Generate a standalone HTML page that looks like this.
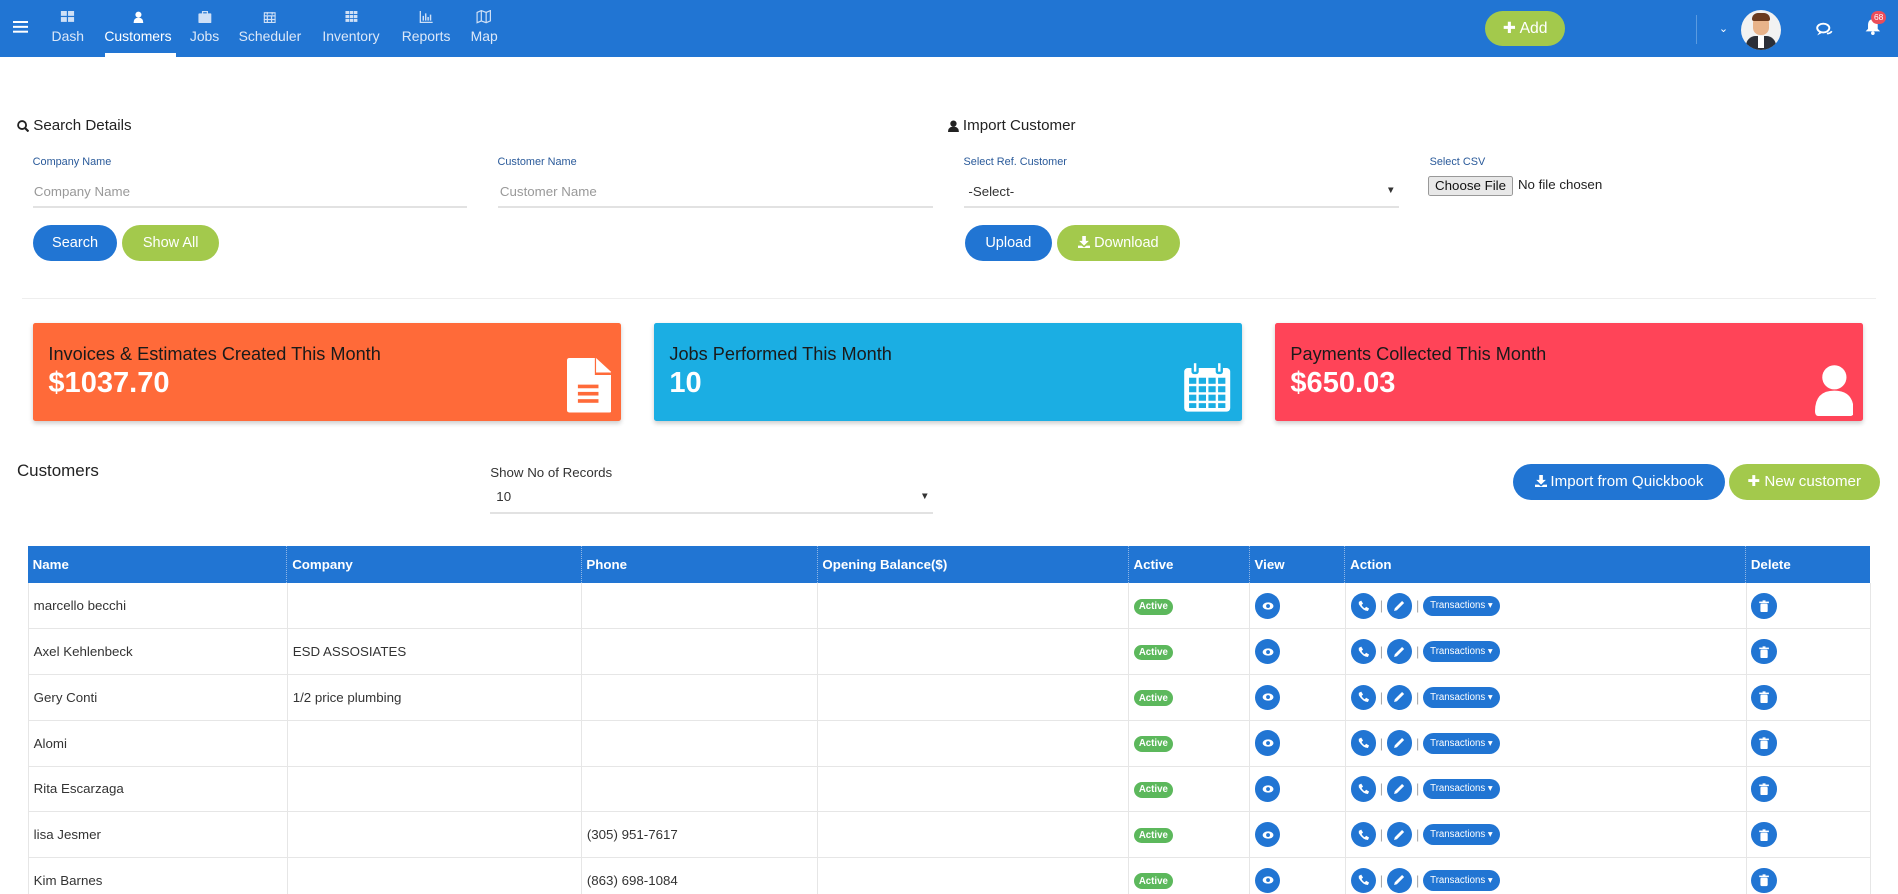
<!DOCTYPE html>
<html><head><meta charset="utf-8"><style>
html,body{margin:0;padding:0;width:1898px;height:894px;overflow:hidden;background:#fff}
#w{zoom:1.2105;width:1568px;height:739px;position:relative;font-family:"Liberation Sans",sans-serif;color:#333}
.a{position:absolute}
.hdr{left:0;top:0;width:1568px;height:47px;background:#2175d3}
.nav{top:8px;color:#fff;font-size:11.5px;text-align:center;transform:translateX(-50%);white-space:nowrap}
.nav .ic{height:12px;display:flex;align-items:center;justify-content:center;margin-bottom:3px}
.btn{border-radius:16px;color:#fff;font-size:12px;text-align:center;line-height:30px;height:30px}
.blue{background:#2175d3}.green{background:#a3c94c}
.lbl{font-size:9px;color:#2a5a9a}
.ph{font-size:11px;color:#999}
.ul{height:2px;background:#e2e2e2}
.card{top:267px;height:81px;width:486px;border-radius:2px;box-shadow:0 2px 4px rgba(0,0,0,.2)}
.card .t{position:absolute;left:13px;top:17px;font-size:15px;color:#1a1a1a}
.card .v{position:absolute;left:13px;top:36px;font-size:24px;font-weight:bold;color:#fff}
table{position:absolute;left:23px;top:451px;border-collapse:collapse;font-size:11px;table-layout:fixed}
th{background:#2175d3;color:#fff;text-align:left;height:31px;padding:0 4px;border-left:1px dotted #8fb6e6;font-weight:bold}
td{height:37px;padding:0 4px;border:1px solid #e6e6e6;border-top:none;color:#333}
.act{display:inline-block;background:#5cb85c;color:#fff;font-size:8px;font-weight:bold;padding:2px 4px;border-radius:8px}
.c{display:inline-block;width:21px;height:21px;border-radius:50%;background:#2175d3;vertical-align:middle;position:relative}
.c svg{position:absolute;left:5.5px;top:5.5px}
.tr{display:inline-block;background:#2175d3;color:#fff;font-size:8px;padding:4px 6px;border-radius:9px;vertical-align:middle}
.sep{color:#aaa;margin:0 3px;vertical-align:middle}
.dl{vertical-align:-1px;margin-right:3px}
</style></head><body><div id="w">
<div class="a hdr"></div>
<div class="a" style="left:11px;top:17px;width:12px;height:2px;background:#fff;box-shadow:0 4px 0 #fff,0 8px 0 #fff"></div>
<div class="a nav" style="left:56px"><div class="ic"><svg width="11" height="10"><rect x="0" y="0" width="5" height="4" fill="#cfe0f6"/><rect x="6" y="0" width="5" height="4" fill="#cfe0f6"/><rect x="0" y="5" width="5" height="4" fill="#cfe0f6"/><rect x="6" y="5" width="5" height="4" fill="#cfe0f6"/></svg></div><span style="color:#dce8f8">Dash</span></div>
<div class="a nav" style="left:114px"><div class="ic"><svg width="10" height="10"><circle cx="5" cy="3" r="2.5" fill="#fff"/><path d="M1 10 Q1 5.5 5 5.5 Q9 5.5 9 10Z" fill="#fff"/></svg></div>Customers</div>
<div class="a" style="left:87px;top:44px;width:58px;height:3px;background:#fff"></div>
<div class="a nav" style="left:169px"><div class="ic"><svg width="11" height="10"><rect x="0" y="2" width="11" height="8" rx="1" fill="#cfe0f6"/><rect x="3.5" y="0.5" width="4" height="2.5" fill="none" stroke="#cfe0f6"/></svg></div><span style="color:#dce8f8">Jobs</span></div>
<div class="a nav" style="left:223px"><div class="ic"><svg width="10" height="10"><rect x="0.5" y="1.5" width="9" height="8" fill="none" stroke="#cfe0f6"/><path d="M0 4h10M3 1v2M7 1v2M3 4v6M6.5 4v6M0 7h10" stroke="#cfe0f6"/></svg></div><span style="color:#dce8f8">Scheduler</span></div>
<div class="a nav" style="left:290px"><div class="ic"><svg width="10" height="9"><g fill="#cfe0f6"><rect x="0" y="0" width="3" height="2.5"/><rect x="3.5" y="0" width="3" height="2.5"/><rect x="7" y="0" width="3" height="2.5"/><rect x="0" y="3.3" width="3" height="2.5"/><rect x="3.5" y="3.3" width="3" height="2.5"/><rect x="7" y="3.3" width="3" height="2.5"/><rect x="0" y="6.5" width="3" height="2.5"/><rect x="3.5" y="6.5" width="3" height="2.5"/><rect x="7" y="6.5" width="3" height="2.5"/></g></svg></div><span style="color:#dce8f8">Inventory</span></div>
<div class="a nav" style="left:352px"><div class="ic"><svg width="11" height="10"><path d="M0.5 0v9.5h10.5M3 8V4M5 8V2M7 8V5M9 8V3" stroke="#cfe0f6" stroke-width="1.2" fill="none"/></svg></div><span style="color:#dce8f8">Reports</span></div>
<div class="a nav" style="left:400px"><div class="ic"><svg width="12" height="11"><path d="M0.5 2l3.5-1.5 4 1.5 3.5-1.5v8.5l-3.5 1.5-4-1.5-3.5 1.5z M4 0.5v8.5M8 2v8.5" stroke="#cfe0f6" fill="none"/></svg></div><span style="color:#dce8f8">Map</span></div>
<div class="a btn green" style="left:1227px;top:9px;width:66px;height:29px;line-height:29px;border-radius:15px;font-size:13px">✚ Add</div>
<div class="a" style="left:1401px;top:12px;width:1px;height:24px;background:#5b9be0"></div>
<div class="a" style="left:1420px;top:18px;color:#fff;font-size:9px">⌄</div>
<div class="a" style="left:1438px;top:8px;width:33px;height:33px;border-radius:50%;background:#f2f2f2;overflow:hidden">
<div class="a" style="left:10px;top:5px;width:13px;height:16px;border-radius:6px;background:#e8b38a"></div>
<div class="a" style="left:9px;top:3px;width:15px;height:6px;border-radius:6px 6px 2px 2px;background:#6b3b1f"></div>
<div class="a" style="left:4px;top:22px;width:25px;height:14px;border-radius:8px 8px 0 0;background:#2b2f38"></div>
<div class="a" style="left:14px;top:22px;width:5px;height:10px;background:#fff"></div></div>
<div class="a" style="left:1500px;top:16px"><svg width="14" height="12"><ellipse cx="6" cy="5" rx="5" ry="3.6" fill="none" stroke="#fff" stroke-width="1.6"/><path d="M3 8l-2 3 4-2" fill="#fff"/><path d="M9 9.5q3 0 4-2" stroke="#fff" stroke-width="1.4" fill="none"/></svg></div>
<div class="a" style="left:1541px;top:15px"><svg width="13" height="14"><path d="M6.5 1q4 0 4 5v3l2 2H0.5l2-2V6q0-5 4-5z" fill="#fff"/><circle cx="6.5" cy="12.5" r="1.5" fill="#fff"/></svg></div>
<div class="a" style="left:1546px;top:9px;width:12px;height:11px;border-radius:6px;background:#ea4d5a;color:#fff;font-size:7px;text-align:center;line-height:11px">68</div>

<div class="a" style="left:14px;top:97px;font-size:12.5px;color:#222"><svg width="10" height="10" style="vertical-align:-1px"><circle cx="4.2" cy="4.2" r="3.3" stroke="#222" stroke-width="1.5" fill="none"/><path d="M6.5 6.5l3 3" stroke="#222" stroke-width="1.8"/></svg> Search Details</div>
<div class="a" style="left:783px;top:97px;font-size:12.5px;color:#222"><svg width="9" height="10" style="vertical-align:-1px"><circle cx="4.5" cy="3" r="2.6" fill="#222"/><path d="M0 10q0-4.5 4.5-4.5T9 10z" fill="#222"/></svg> Import Customer</div>
<div class="a lbl" style="left:27px;top:129px">Company Name</div>
<div class="a lbl" style="left:411px;top:129px">Customer Name</div>
<div class="a lbl" style="left:796px;top:129px">Select Ref. Customer</div>
<div class="a lbl" style="left:1181px;top:129px">Select CSV</div>
<div class="a ph" style="left:28px;top:152px">Company Name</div>
<div class="a ph" style="left:413px;top:152px">Customer Name</div>
<div class="a" style="left:800px;top:152px;font-size:11px;color:#333">-Select-</div>
<div class="a" style="left:1145px;top:153px;font-size:8px;color:#333">▼</div>
<div class="a ul" style="left:27px;top:170px;width:359px"></div>
<div class="a ul" style="left:411px;top:170px;width:360px"></div>
<div class="a ul" style="left:796px;top:170px;width:360px"></div>
<div class="a" style="left:1180px;top:145px;width:68px;height:15px;border:1px solid #999;background:#e8e8e8;border-radius:2px;font-size:11px;text-align:center;line-height:15px;color:#111">Choose File</div>
<div class="a" style="left:1254px;top:146px;font-size:11px;color:#222">No file chosen</div>
<div class="a btn blue" style="left:27px;top:186px;width:70px">Search</div>
<div class="a btn green" style="left:101px;top:186px;width:80px">Show All</div>
<div class="a btn blue" style="left:797px;top:186px;width:72px">Upload</div>
<div class="a btn green" style="left:873px;top:186px;width:102px"><svg class="dl" width="10" height="10"><path d="M3.5 0h3v4h2.5L5 8 1 4h2.5z M0 8h3l2 1.5 2-1.5h3v2H0z" fill="#fff"/></svg>Download</div>
<div class="a" style="left:18px;top:246px;width:1532px;height:1px;background:#eee"></div>

<div class="a card" style="left:27px;background:#ff6a39"><div class="t">Invoices &amp; Estimates Created This Month</div><div class="v">$1037.70</div>
<svg class="a" style="left:441px;top:29px" width="37" height="45"><path d="M0 2q0-2 2-2h21l14 14v29q0 2-2 2H2q-2 0-2-2z" fill="#fff"/><path d="M23 0v14h14z" fill="#ff6a39"/><path d="M24 0v12h13" fill="#fff"/><rect x="9" y="22" width="17" height="3" fill="#ff6a39"/><rect x="9" y="28" width="17" height="3" fill="#ff6a39"/><rect x="9" y="34" width="17" height="3" fill="#ff6a39"/></svg></div>
<div class="a card" style="left:540px;background:#1baee3"><div class="t">Jobs Performed This Month</div><div class="v">10</div>
<svg class="a" style="left:437px;top:32px" width="40" height="42"><rect x="1" y="5" width="38" height="36" rx="3" fill="#fff"/><g fill="#1baee3"><rect x="5" y="13" width="6" height="5"/><rect x="13" y="13" width="6" height="5"/><rect x="21" y="13" width="6" height="5"/><rect x="29" y="13" width="6" height="5"/><rect x="5" y="20" width="6" height="5"/><rect x="13" y="20" width="6" height="5"/><rect x="21" y="20" width="6" height="5"/><rect x="29" y="20" width="6" height="5"/><rect x="5" y="27" width="6" height="5"/><rect x="13" y="27" width="6" height="5"/><rect x="21" y="27" width="6" height="5"/><rect x="29" y="27" width="6" height="5"/><rect x="5" y="34" width="6" height="4"/><rect x="13" y="34" width="6" height="4"/><rect x="21" y="34" width="6" height="4"/><rect x="29" y="34" width="6" height="4"/><rect x="7" y="0" width="6" height="10" rx="2"/><rect x="27" y="0" width="6" height="10" rx="2"/></g><rect x="9" y="1" width="2" height="7" fill="#fff"/><rect x="29" y="1" width="2" height="7" fill="#fff"/></svg></div>
<div class="a card" style="left:1053px;background:#ff4458"><div class="t">Payments Collected This Month</div><div class="v">$650.03</div>
<svg class="a" style="left:446px;top:34px" width="32" height="43"><circle cx="16" cy="11" r="10" fill="#fff"/><path d="M0 39q0-17 16-17t16 17q0 4-3 4H3q-3 0-3-4z" fill="#fff"/></svg></div>

<div class="a" style="left:14px;top:381px;font-size:14px;color:#222">Customers</div>
<div class="a" style="left:405px;top:384px;font-size:11px;color:#333">Show No of Records</div>
<div class="a" style="left:410px;top:404px;font-size:11px;color:#333">10</div>
<div class="a" style="left:760px;top:406px;font-size:8px;color:#333">▼</div>
<div class="a ul" style="left:405px;top:423px;width:366px"></div>
<div class="a btn blue" style="left:1250px;top:383px;width:175px;font-size:12.5px"><svg class="dl" width="10" height="10"><path d="M3.5 0h3v4h2.5L5 8 1 4h2.5z M0 8h3l2 1.5 2-1.5h3v2H0z" fill="#fff"/></svg>Import from Quickbook</div>
<div class="a btn green" style="left:1428px;top:383px;width:125px;font-size:12.5px">✚ New customer</div>

<table>
<colgroup><col style="width:214px"><col style="width:243px"><col style="width:195px"><col style="width:257px"><col style="width:100px"><col style="width:79px"><col style="width:331px"><col style="width:103px"></colgroup>
<tr><th style="border-left:none">Name</th><th>Company</th><th>Phone</th><th>Opening Balance($)</th><th>Active</th><th>View</th><th>Action</th><th>Delete</th></tr>
</table>
<div id="rows"></div>
<script>
var d=[["marcello becchi","",""],["Axel Kehlenbeck","ESD ASSOSIATES",""],["Gery Conti","1/2 price plumbing",""],["Alomi","",""],["Rita Escarzaga","",""],["lisa Jesmer","","(305) 951-7617"],["Kim Barnes","","(863) 698-1084"]];
var eye='<span class="c"><svg width="10" height="10"><ellipse cx="5" cy="5" rx="4.5" ry="3" fill="#fff"/><circle cx="5" cy="5" r="1.6" fill="#2175d3"/></svg></span>';
var ph='<span class="c"><svg width="10" height="10"><path d="M1.5 1.5l2-1 1.5 2.5-1.2 1q0.8 2 2.7 2.8l1-1.2 2.5 1.5-1 2q-4 0-7.5-5.6z" fill="#fff"/></svg></span>';
var pen='<span class="c"><svg width="10" height="10"><path d="M7.5 0.8l1.7 1.7-6 6-2.3 0.6 0.6-2.3z" fill="#fff"/></svg></span>';
var tr='<span class="tr">Transactions ▾</span>';
var del='<span class="c"><svg width="10" height="10"><rect x="2" y="3" width="6" height="7" rx="1" fill="#fff"/><rect x="1" y="1.3" width="8" height="1.3" fill="#fff"/><rect x="3.8" y="0.3" width="2.4" height="1.3" fill="#fff"/></svg></span>';
var h='<table style="top:482px">'+'<colgroup><col style="width:214px"><col style="width:243px"><col style="width:195px"><col style="width:257px"><col style="width:100px"><col style="width:79px"><col style="width:331px"><col style="width:103px"></colgroup>';
d.forEach(function(r){h+='<tr><td>'+r[0]+'</td><td>'+r[1]+'</td><td>'+r[2]+'</td><td></td><td><span class="act">Active</span></td><td>'+eye+'</td><td>'+ph+'<span class="sep">|</span>'+pen+'<span class="sep">|</span>'+tr+'</td><td>'+del+'</td></tr>';});
h+='</table>';document.getElementById('rows').outerHTML=h;
</script>
</div></body></html>
